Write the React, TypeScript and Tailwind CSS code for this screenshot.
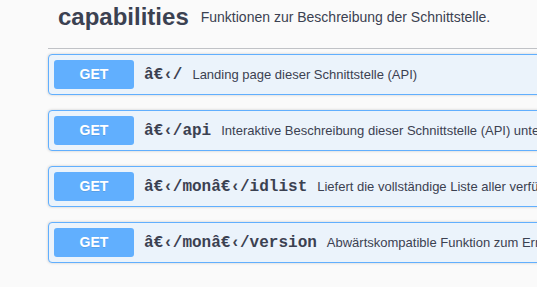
const ops = [
  { path: "â€‹/", text: "Landing page dieser Schnittstelle (API)" },
  {
    path: "â€‹/api",
    text: "Interaktive Beschreibung dieser Schnittstelle (API) unter Verwendung von Swagger UI",
  },
  {
    path: "â€‹/monâ€‹/idlist",
    text: "Liefert die vollständige Liste aller verfügbaren Identifikatoren",
  },
  {
    path: "â€‹/monâ€‹/version",
    text: "Abwärtskompatible Funktion zum Ermitteln der Version",
  },
];

export default function App() {
  return (
    <div className="w-[537px] h-[287px] overflow-hidden bg-[#fafafa] text-[#3b4151] font-['Liberation_Sans',Arial,sans-serif]">
      <div className="w-[900px] pl-[48px]">
        {/* Tag-Kopf */}
        <div className="flex items-center h-[49px] pb-[14px] pl-[10px] border-b border-[#3b4151]/30 mb-[5px]">
          <h4 className="text-[24px] font-bold leading-normal">capabilities</h4>
          <small className="text-[14px] px-[12px]">
            Funktionen zur Beschreibung der Schnittstelle.
          </small>
        </div>

        {/* Operationen */}
        {ops.map((op, i) => (
          <div
            key={i}
            className="flex items-center p-[5px] mb-[15px] border border-[#61affe] rounded-[4px] bg-[#ebf3fb] shadow-[0_0_3px_rgba(0,0,0,0.19)] whitespace-nowrap"
          >
            <span className="flex items-center justify-center min-w-[80px] h-[29px] rounded-[3px] bg-[#61affe] text-white text-[14px] font-bold [text-shadow:0_1px_0_rgba(0,0,0,0.1)]">
              GET
            </span>
            <span className="px-[10px] text-[16px] font-bold font-['Liberation_Mono','Courier_New',monospace]">
              {op.path}
            </span>
            <span className="text-[13px]">{op.text}</span>
          </div>
        ))}
      </div>
    </div>
  );
}
